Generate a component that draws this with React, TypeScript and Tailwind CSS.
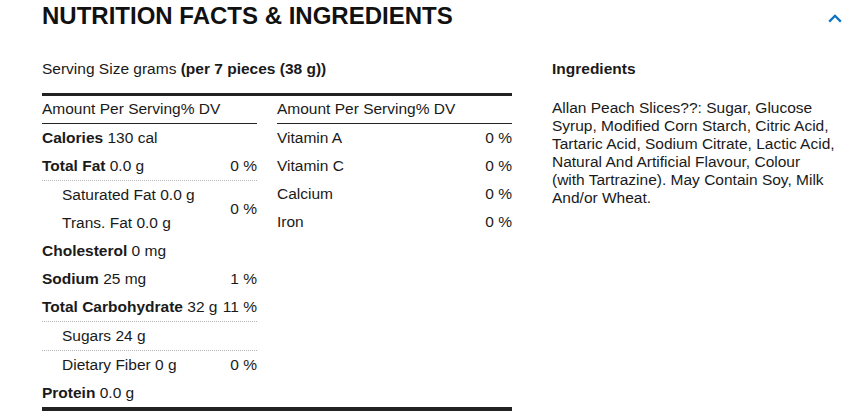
import React from "react";

type Row = {
  label: string;
  value: string;
  dv?: string;
  bold?: boolean;
  indent?: boolean;
  dotted?: boolean;
};

const Line = ({ label, value, dv, bold, indent, dotted }: Row) => (
  <div
    className={`flex justify-between py-1 leading-5 ${indent ? "pl-5" : ""} ${
      dotted ? "border-b border-dotted border-[#b5b5b5]" : ""
    }`}
  >
    <span>
      {bold ? <b className="font-bold">{label}</b> : label} {value}
    </span>
    {dv && <span>{dv}</span>}
  </div>
);

const vitamins = [
  { id: 1, name: "Vitamin A", dv: "0 %" },
  { id: 2, name: "Vitamin C", dv: "0 %" },
  { id: 3, name: "Calcium", dv: "0 %" },
  { id: 4, name: "Iron", dv: "0 %" },
];

export default function App() {
  return (
    <div
      className="w-[855px] h-[417px] overflow-hidden bg-white pl-[42px] pr-[13px] text-[#1a1a1a]"
      style={{ fontFamily: '"Liberation Sans", Arial, sans-serif' }}
    >
      {/* Title */}
      <div className="flex h-8 items-center justify-between">
        <h2 className="text-[24px] font-bold leading-8 text-[#111]">
          NUTRITION FACTS &amp; INGREDIENTS
        </h2>
        <svg width="14" height="9" viewBox="0 0 14 9" className="mt-[5px]">
          <polyline
            points="1.2,7.6 7,1.8 12.8,7.6"
            fill="none"
            stroke="#0b72c4"
            strokeWidth="2.3"
          />
        </svg>
      </div>

      <div className="mt-[27px] flex gap-[40px] text-[15.5px]">
        {/* Nutrition */}
        <section className="w-[470px]">
          <p className="leading-5">
            Serving Size grams <b className="font-bold">(per 7 pieces (38 g))</b>
          </p>

          <div className="mt-[14px] flex gap-5 border-t-[3px] border-b-4 border-[#222]">
            <div className="w-[215px]">
              <div className="border-b border-[#222] pt-[3px] pb-1 leading-5">
                Amount Per Serving% DV
              </div>
              <Line label="Calories" value="130 cal" bold />
              <Line label="Total Fat" value="0.0 g" dv="0 %" bold dotted />
              <div className="flex items-center justify-between">
                <div>
                  <Line label="Saturated Fat" value="0.0 g" indent />
                  <Line label="Trans. Fat" value="0.0 g" indent />
                </div>
                <span>0 %</span>
              </div>
              <Line label="Cholesterol" value="0 mg" bold />
              <Line label="Sodium" value="25 mg" dv="1 %" bold />
              <Line label="Total Carbohydrate" value="32 g" dv="11 %" bold dotted />
              <Line label="Sugars" value="24 g" indent dotted />
              <Line label="Dietary Fiber" value="0 g" dv="0 %" indent />
              <Line label="Protein" value="0.0 g" bold />
            </div>

            <div className="w-[235px]">
              <div className="border-b border-[#222] pt-[3px] pb-1 leading-5">
                Amount Per Serving% DV
              </div>
              {vitamins.map((v) => (
                <div key={v.id} className="flex justify-between py-1 leading-5">
                  <span>{v.name}</span>
                  <span>{v.dv}</span>
                </div>
              ))}
            </div>
          </div>
        </section>

        {/* Ingredients */}
        <section className="w-[283px]">
          <h3 className="font-bold leading-5">Ingredients</h3>
          <p className="mt-5 leading-[18px]">
            Allan Peach Slices??: Sugar, Glucose Syrup, Modified Corn Starch, Citric Acid,
            Tartaric Acid, Sodium Citrate, Lactic Acid, Natural And Artificial Flavour,
            Colour (with Tartrazine). May Contain Soy, Milk And/or Wheat.
          </p>
        </section>
      </div>
    </div>
  );
}
